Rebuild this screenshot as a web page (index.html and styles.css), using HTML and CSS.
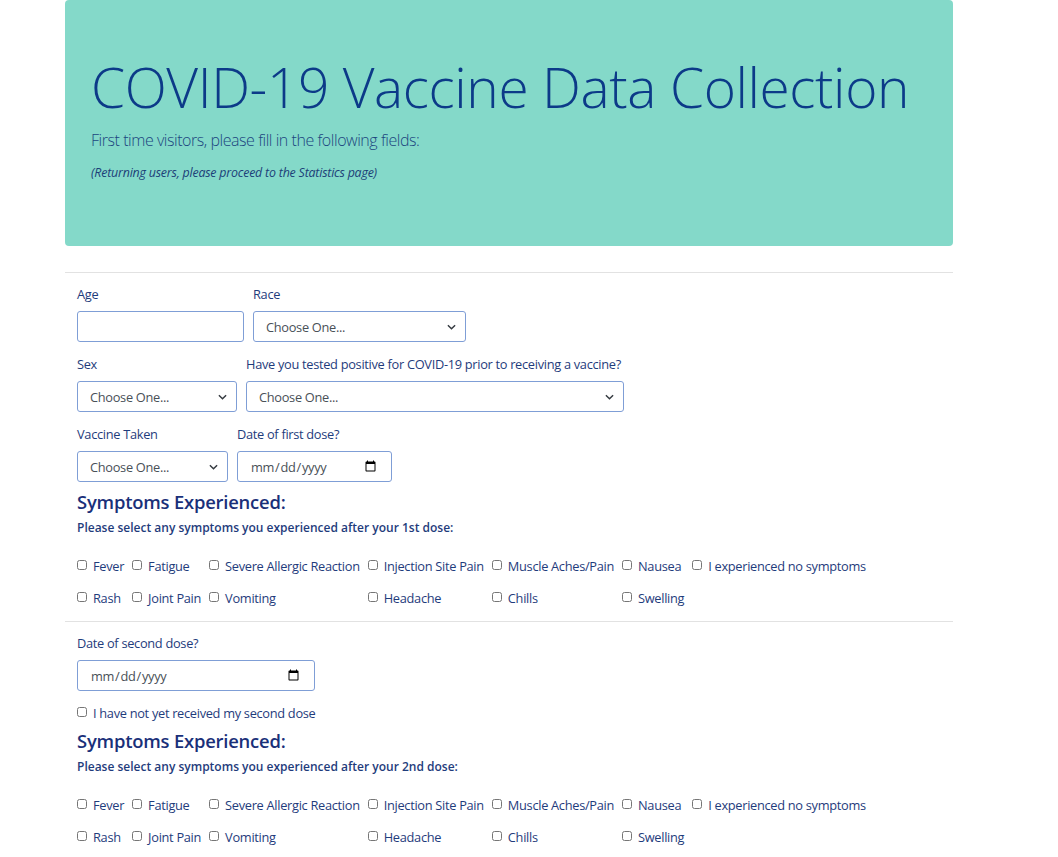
FILE: index.html
```html
<!DOCTYPE html>
<html lang="en">
<head>
  <meta charset="UTF-8">
  <meta name="viewport" content="width=device-width, initial-scale=1.0">
  <title>COVID-19 Vaccine Data Collection</title>
  <link rel="stylesheet" href="styles.css">
</head>
<body>
  <div class="container">
    <div class="jumbotron">
      <h1 class="title">COVID-19 Vaccine Data Collection</h1>
      <p class="lead">First time visitors, please fill in the following fields:</p>
      <p class="note"><em>(Returning users, please proceed to the Statistics page)</em></p>
    </div>
    <hr>

    <form class="survey">
      <!-- Demographics -->
      <div class="form-row">
        <div class="form-group w-age">
          <label for="age">Age</label>
          <input type="text" id="age" class="form-control">
        </div>
        <div class="form-group w-race">
          <label for="race">Race</label>
          <div class="select-wrap">
            <select id="race" class="form-control"><option>Choose One...</option></select>
            <svg class="chev" viewBox="0 0 10 6"><path d="M1 1l4 4 4-4"/></svg>
          </div>
        </div>
      </div>
      <div class="form-row">
        <div class="form-group w-sex">
          <label for="sex">Sex</label>
          <div class="select-wrap">
            <select id="sex" class="form-control"><option>Choose One...</option></select>
            <svg class="chev" viewBox="0 0 10 6"><path d="M1 1l4 4 4-4"/></svg>
          </div>
        </div>
        <div class="form-group w-prior">
          <label for="prior">Have you tested positive for COVID-19 prior to receiving a vaccine?</label>
          <div class="select-wrap">
            <select id="prior" class="form-control"><option>Choose One...</option></select>
            <svg class="chev" viewBox="0 0 10 6"><path d="M1 1l4 4 4-4"/></svg>
          </div>
        </div>
      </div>
      <div class="form-row last">
        <div class="form-group w-vaccine">
          <label for="vaccine">Vaccine Taken</label>
          <div class="select-wrap">
            <select id="vaccine" class="form-control"><option>Choose One...</option></select>
            <svg class="chev" viewBox="0 0 10 6"><path d="M1 1l4 4 4-4"/></svg>
          </div>
        </div>
        <div class="form-group w-date1">
          <label for="dose1">Date of first dose?</label>
          <input type="date" id="dose1" class="form-control">
        </div>
      </div>

      <!-- 1st dose symptoms -->
      <h4 class="sym-title">Symptoms Experienced:</h4>
      <p class="sym-sub">Please select any symptoms you experienced after your 1st dose:</p>
      <div class="sym-grid">
        <label class="check"><input type="checkbox"> Fever</label>
        <label class="check"><input type="checkbox"> Rash</label>
        <label class="check"><input type="checkbox"> Fatigue</label>
        <label class="check"><input type="checkbox"> Joint Pain</label>
        <label class="check"><input type="checkbox"> Severe Allergic Reaction</label>
        <label class="check"><input type="checkbox"> Vomiting</label>
        <label class="check"><input type="checkbox"> Injection Site Pain</label>
        <label class="check"><input type="checkbox"> Headache</label>
        <label class="check"><input type="checkbox"> Muscle Aches/Pain</label>
        <label class="check"><input type="checkbox"> Chills</label>
        <label class="check"><input type="checkbox"> Nausea</label>
        <label class="check"><input type="checkbox"> Swelling</label>
        <label class="check"><input type="checkbox"> I experienced no symptoms</label>
      </div>

      <hr>

      <!-- 2nd dose -->
      <div class="form-group w-date2">
        <label for="dose2">Date of second dose?</label>
        <input type="date" id="dose2" class="form-control">
      </div>
      <label class="check single"><input type="checkbox"> I have not yet received my second dose</label>

      <h4 class="sym-title">Symptoms Experienced:</h4>
      <p class="sym-sub">Please select any symptoms you experienced after your 2nd dose:</p>
      <div class="sym-grid">
        <label class="check"><input type="checkbox"> Fever</label>
        <label class="check"><input type="checkbox"> Rash</label>
        <label class="check"><input type="checkbox"> Fatigue</label>
        <label class="check"><input type="checkbox"> Joint Pain</label>
        <label class="check"><input type="checkbox"> Severe Allergic Reaction</label>
        <label class="check"><input type="checkbox"> Vomiting</label>
        <label class="check"><input type="checkbox"> Injection Site Pain</label>
        <label class="check"><input type="checkbox"> Headache</label>
        <label class="check"><input type="checkbox"> Muscle Aches/Pain</label>
        <label class="check"><input type="checkbox"> Chills</label>
        <label class="check"><input type="checkbox"> Nausea</label>
        <label class="check"><input type="checkbox"> Swelling</label>
        <label class="check"><input type="checkbox"> I experienced no symptoms</label>
      </div>
    </form>
  </div>
</body>
</html>
```

FILE: styles.css
```css
body {
  margin: 0;
  font-family: "Open Sans", "Noto Sans", sans-serif;
  font-size: 12.8px;
  letter-spacing: -0.3px;
  color: #1f3c7c;
  background: #fff;
}
.container {
  width: 888px;
  margin-left: 65px;
}

/* Header */
.jumbotron {
  background-color: #84d9c9;
  border-radius: 4px;
  padding: 54px 26px 0;
  height: 246px;
  box-sizing: border-box;
}
.title {
  margin: 0 0 9px;
  font-size: 55px;
  font-weight: 300;
  line-height: 66px;
  letter-spacing: -0.4px;
  white-space: nowrap;
  color: #0c3a88;
}
.lead {
  margin: 0 0 13px;
  font-size: 16px;
  font-weight: 300;
  line-height: 22px;
  letter-spacing: -0.45px;
  color: #1c467f;
}
.note {
  margin: 0;
  font-size: 12.4px;
  line-height: 17px;
  letter-spacing: -0.2px;
  color: #1c3f78;
}

hr {
  margin: 26px 0 12px;
  border: 0;
  border-top: 1px solid #e2e2e2;
}
.survey hr {
  margin: 13px -12px 12px;
}

/* Form */
.survey {
  padding: 0 12px;
}
.form-row {
  display: flex;
  gap: 9px;
}
.form-group {
  margin-bottom: 13px;
}
.form-row.last .form-group {
  margin-bottom: 9px;
}
.form-group label {
  display: block;
  line-height: 19px;
  margin-bottom: 7px;
}
.form-control {
  display: block;
  width: 100%;
  height: 31px;
  box-sizing: border-box;
  padding: 4px 12px;
  font-family: inherit;
  font-size: 12.8px;
  letter-spacing: -0.3px;
  color: #495057;
  background: #fff;
  border: 1px solid #7f9ed6;
  border-radius: 3px;
}
select.form-control {
  appearance: none;
  -webkit-appearance: none;
}
.select-wrap {
  position: relative;
}
.chev {
  position: absolute;
  right: 10px;
  top: 13px;
  width: 9px;
  height: 6px;
  fill: none;
  stroke: #343a40;
  stroke-width: 1.6;
  pointer-events: none;
}
.w-age { width: 167px; }
.w-race { width: 213px; }
.w-sex { width: 160px; }
.w-prior { width: 378px; }
.w-vaccine { width: 151px; }
.w-date1 { width: 155px; }
.w-date2 { width: 238px; margin-bottom: 13px; }

/* Symptoms */
.sym-title {
  margin: 0 0 6px;
  font-size: 18.4px;
  font-weight: 600;
  line-height: 1.2;
  letter-spacing: -0.2px;
  color: #1a3079;
}
.sym-sub {
  margin: 0 0 21px;
  font-size: 12px;
  font-weight: 600;
  letter-spacing: 0;
  color: #1f3c7c;
}
.sym-grid {
  display: grid;
  grid-template-rows: auto auto;
  grid-auto-flow: column;
  justify-content: start;
  column-gap: 8px;
  row-gap: 13px;
}
.check {
  display: flex;
  align-items: center;
  line-height: 19px;
  white-space: nowrap;
}
.check input {
  width: 10px;
  height: 10px;
  margin: 0 6px 4px 0;
}
.check.single {
  margin-bottom: 7px;
}
```
